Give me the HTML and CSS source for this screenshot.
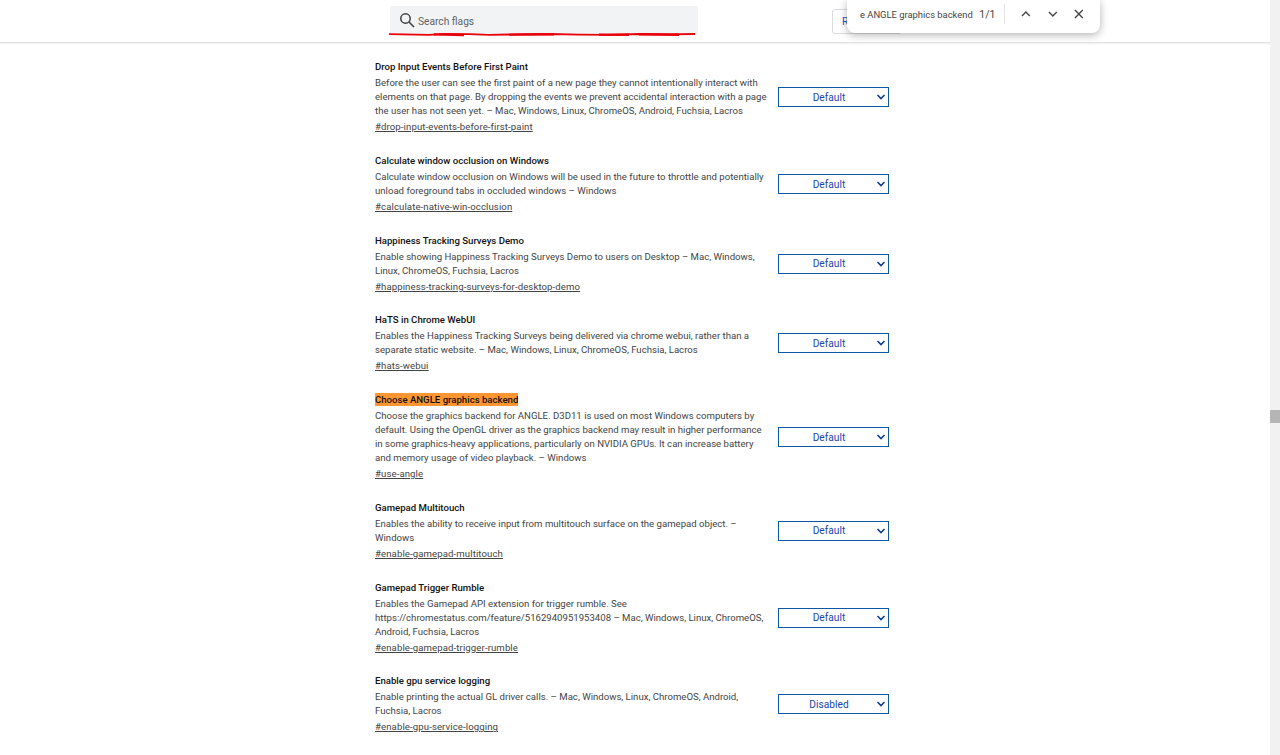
FILE: index.html
```html
<!DOCTYPE html>
<html lang="en">
<head>
  <meta charset="UTF-8" />
  <meta name="viewport" content="width=device-width, initial-scale=1.0"/>
  <title>Experiments</title>
  <link rel="stylesheet" href="styles.css">
</head>
<body>

  <div class="page">
    <header>
      <div class="search">
        <svg class="search-icon" width="16" height="16" viewBox="0 0 16 16"><circle cx="6.5" cy="6.5" r="4.7" fill="none" stroke="#3c4043" stroke-width="1.5"/><path d="M10 10l5 5" stroke="#3c4043" stroke-width="1.6"/></svg>
        <span>Search flags</span>
        <svg class="scribble" width="310" height="5" viewBox="0 0 310 5"><path d="M0 2.2 L40 2.8 L55 2 L80 2.2 L100 2.8 L130 2.4 L160 2 L190 2.6 L220 2.8 L250 2 L280 2.4 L306 2" fill="none" stroke="#e8000b" stroke-width="1.8"/><path d="M45 2.4 L75 3 M120 2.6 L165 2.2 M210 2.6 L240 2.8 M250 2.2 L290 2.8" fill="none" stroke="#e8000b" stroke-width="2.4"/></svg>
      </div>
      <button class="reset">Reset all</button>
    </header>

    <main>
      <div class="flag first">
        <div class="info">
          <h3>Drop Input Events Before First Paint</h3>
          <p>Before the user can see the first paint of a new page they cannot intentionally interact with elements on that page. By dropping the events we prevent accidental interaction with a page the user has not seen yet. – Mac, Windows, Linux, ChromeOS, Android, Fuchsia, Lacros</p>
          <a href="#">#drop-input-events-before-first-paint</a>
        </div>
        <div class="picker">Default<svg width="10" height="6" viewBox="0 0 10 6"><path d="M1.5 1l3.5 3.5 3.5-3.5" fill="none" stroke="#0b3d91" stroke-width="1.6"/></svg></div>
      </div>

      <div class="flag">
        <div class="info">
          <h3>Calculate window occlusion on Windows</h3>
          <p>Calculate window occlusion on Windows will be used in the future to throttle and potentially unload foreground tabs in occluded windows – Windows</p>
          <a href="#">#calculate-native-win-occlusion</a>
        </div>
        <div class="picker">Default<svg width="10" height="6" viewBox="0 0 10 6"><path d="M1.5 1l3.5 3.5 3.5-3.5" fill="none" stroke="#0b3d91" stroke-width="1.6"/></svg></div>
      </div>

      <div class="flag">
        <div class="info">
          <h3>Happiness Tracking Surveys Demo</h3>
          <p>Enable showing Happiness Tracking Surveys Demo to users on Desktop – Mac, Windows, Linux, ChromeOS, Fuchsia, Lacros</p>
          <a href="#">#happiness-tracking-surveys-for-desktop-demo</a>
        </div>
        <div class="picker">Default<svg width="10" height="6" viewBox="0 0 10 6"><path d="M1.5 1l3.5 3.5 3.5-3.5" fill="none" stroke="#0b3d91" stroke-width="1.6"/></svg></div>
      </div>

      <div class="flag">
        <div class="info">
          <h3>HaTS in Chrome WebUI</h3>
          <p>Enables the Happiness Tracking Surveys being delivered via chrome webui, rather than a separate static website. – Mac, Windows, Linux, ChromeOS, Fuchsia, Lacros</p>
          <a href="#">#hats-webui</a>
        </div>
        <div class="picker">Default<svg width="10" height="6" viewBox="0 0 10 6"><path d="M1.5 1l3.5 3.5 3.5-3.5" fill="none" stroke="#0b3d91" stroke-width="1.6"/></svg></div>
      </div>

      <div class="flag">
        <div class="info">
          <h3><mark>Choose ANGLE graphics backend</mark></h3>
          <p>Choose the graphics backend for ANGLE. D3D11 is used on most Windows computers by default. Using the OpenGL driver as the graphics backend may result in higher performance in some graphics-heavy applications, particularly on NVIDIA GPUs. It can increase battery and memory usage of video playback. – Windows</p>
          <a href="#">#use-angle</a>
        </div>
        <div class="picker">Default<svg width="10" height="6" viewBox="0 0 10 6"><path d="M1.5 1l3.5 3.5 3.5-3.5" fill="none" stroke="#0b3d91" stroke-width="1.6"/></svg></div>
      </div>

      <div class="flag">
        <div class="info">
          <h3>Gamepad Multitouch</h3>
          <p>Enables the ability to receive input from multitouch surface on the gamepad object. – Windows</p>
          <a href="#">#enable-gamepad-multitouch</a>
        </div>
        <div class="picker">Default<svg width="10" height="6" viewBox="0 0 10 6"><path d="M1.5 1l3.5 3.5 3.5-3.5" fill="none" stroke="#0b3d91" stroke-width="1.6"/></svg></div>
      </div>

      <div class="flag">
        <div class="info">
          <h3>Gamepad Trigger Rumble</h3>
          <p>Enables the Gamepad API extension for trigger rumble. See https://chromestatus.com/feature/5162940951953408 – Mac, Windows, Linux, ChromeOS, Android, Fuchsia, Lacros</p>
          <a href="#">#enable-gamepad-trigger-rumble</a>
        </div>
        <div class="picker">Default<svg width="10" height="6" viewBox="0 0 10 6"><path d="M1.5 1l3.5 3.5 3.5-3.5" fill="none" stroke="#0b3d91" stroke-width="1.6"/></svg></div>
      </div>

      <div class="flag">
        <div class="info">
          <h3>Enable gpu service logging</h3>
          <p>Enable printing the actual GL driver calls. – Mac, Windows, Linux, ChromeOS, Android, Fuchsia, Lacros</p>
          <a href="#">#enable-gpu-service-logging</a>
        </div>
        <div class="picker">Disabled<svg width="10" height="6" viewBox="0 0 10 6"><path d="M1.5 1l3.5 3.5 3.5-3.5" fill="none" stroke="#0b3d91" stroke-width="1.6"/></svg></div>
      </div>
    </main>
  </div>

  <div class="scrollbar"><div class="thumb"></div></div>

  <!-- find in page bar -->
  <div class="findbar">
    <span class="query">e ANGLE graphics backend</span>
    <span class="count">1/1</span>
    <span class="sep"></span>
    <svg width="12" height="8" viewBox="0 0 12 8"><path d="M2 6l4-4 4 4" fill="none" stroke="#444" stroke-width="1.4"/></svg>
    <svg width="12" height="8" viewBox="0 0 12 8"><path d="M2 2l4 4 4-4" fill="none" stroke="#444" stroke-width="1.4"/></svg>
    <svg width="12" height="12" viewBox="0 0 12 12"><path d="M2 2l8 8M10 2l-8 8" fill="none" stroke="#444" stroke-width="1.4"/></svg>
  </div>

</body>
</html>
```

FILE: styles.css
```css
html, body {
  height: 100%;
}

body {
  margin: 0;
  display: flex;
  height: 755px;
  overflow: hidden;
  background-color: #fff;
  font-family: Roboto, "Noto Sans", sans-serif;
  color: #202124;
}

.page {
  flex: 1;
  min-width: 0;
}

header {
  display: flex;
  height: 36px;
  padding-left: 390px;
  padding-top: 6px;
  border-bottom: 1px solid #e3e3e3;
  box-shadow: 0 1px 1px #f2f2f2;
}

.search {
  position: relative;
  width: 308px;
  height: 28px;
  background-color: #f1f3f4;
  border-radius: 3px;
  display: flex;
  align-items: center;
  gap: 3px;
  padding-left: 9px;
  box-sizing: border-box;
  font-size: 10.2px;
  color: #5f6368;
}

.search span {
  padding-top: 2px;
}

.scribble {
  position: absolute;
  left: -1px;
  bottom: -3px;
}

.reset {
  margin-left: 134px;
  width: 70px;
  height: 25px;
  margin-top: 3px;
  background: #fff;
  border: 1px solid #dadce0;
  border-radius: 3px;
  color: #1a56c4;
  font: inherit;
  font-size: 10.2px;
  text-align: left;
  padding-left: 9px;
}

main {
  width: 514px;
  margin-left: 375px;
}

.flag {
  display: flex;
  align-items: center;
  justify-content: space-between;
  padding-top: 10px;
  padding-bottom: 9.7px;
}

.flag.first {
  margin-top: 7.4px;
}

.info {
  width: 395px;
}

h3 {
  margin: 0 0 2px;
  font-size: 9.6px;
  line-height: 14px;
  font-weight: 500;
  color: #111;
}

mark {
  background-color: #ff9632;
  color: #111;
  padding: 1px 0;
}

p {
  margin: 0 0 2px;
  font-size: 9.6px;
  line-height: 14px;
  color: #444;
}

a {
  display: block;
  font-size: 9.6px;
  letter-spacing: 0.1px;
  line-height: 14px;
  color: #444;
}

.picker {
  width: 111px;
  height: 20px;
  box-sizing: border-box;
  padding-right: 9px;
  border: 1px solid #0b57a4;
  background: #fff;
  color: #1846a8;
  font-size: 10.2px;
  display: flex;
  align-items: center;
  justify-content: center;
  position: relative;
}

.picker svg {
  position: absolute;
  right: 2px;
  top: 6px;
}

.scrollbar {
  width: 10px;
  background-color: #f1f1f1;
  position: relative;
}

.thumb {
  position: absolute;
  top: 410px;
  left: 0;
  right: 0;
  height: 13px;
  background-color: #b5b5b5;
}

.findbar {
  position: absolute;
  top: 0;
  left: 847px;
  width: 253px;
  height: 33px;
  background: #fff;
  border-radius: 0 0 8px 8px;
  box-shadow: 0 2px 8px rgba(0, 0, 0, 0.3);
  display: flex;
  align-items: center;
  font-size: 9.4px;
  color: #444;
  box-sizing: border-box;
  padding-left: 13px;
  padding-bottom: 5px;
}

.query {
  width: 122px;
  overflow: hidden;
  white-space: nowrap;
}

.count {
  width: 25px;
  font-size: 10.5px;
}

.sep {
  width: 1px;
  height: 20px;
  background: #e3e3e3;
  margin-right: 15px;
}

.findbar svg {
  margin-right: 15px;
}
```
